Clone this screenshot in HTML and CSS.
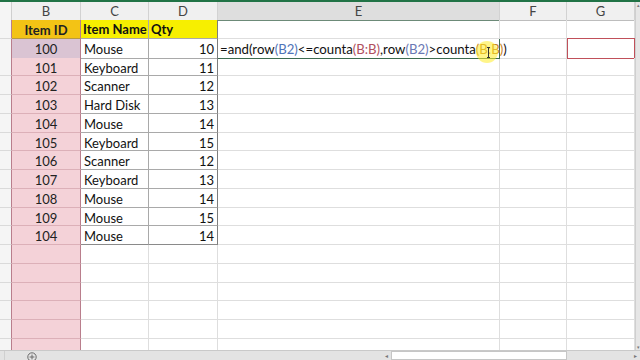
FILE: index.html
```html
<!DOCTYPE html>
<html lang="en">

<head>
    <meta charset="UTF-8">
    <meta name="viewport" content="width=device-width, initial-scale=1.0">
    <title>Sheet</title>
    <link rel="stylesheet" href="styles.css">
</head>

<body>

    <div class="app">
        <div class="app__ribbon-edge"></div>
        <div class="sheet">
            <div class="sheet__grid">

                <div class="row row--cols">
                    <div class="rh"></div>
                    <div class="col">B</div>
                    <div class="col">C</div>
                    <div class="col">D</div>
                    <div class="col col--active">E</div>
                    <div class="col">F</div>
                    <div class="col">G</div>
                </div>

                <div class="row">
                    <div class="rh"></div>
                    <div class="cell cell--b cell--head-id">Item ID</div>
                    <div class="cell cell--t cell--head">Item Name</div>
                    <div class="cell cell--t cell--qty cell--head cell--head-qty">Qty</div>
                    <div class="cell"></div>
                    <div class="cell"></div>
                    <div class="cell"></div>
                </div>

                <div class="row">
                    <div class="rh"></div>
                    <div class="cell cell--b cell--picked">100</div>
                    <div class="cell cell--t">Mouse</div>
                    <div class="cell cell--t cell--qty">10</div>
                    <div class="cell cell--edit">
                        <span class="formula">=and(row<span class="ref ref--1">(B2)</span>&lt;=counta<span class="ref ref--2">(B:B)</span>,row<span class="ref ref--3">(B2)</span>&gt;counta<span class="ref ref--4">(B:B)</span>)</span>
                    </div>
                    <div class="cell cell--over"></div>
                    <div class="cell cell--mark"></div>
                </div>

                <div class="row">
                    <div class="rh"></div>
                    <div class="cell cell--b">101</div>
                    <div class="cell cell--t">Keyboard</div>
                    <div class="cell cell--t cell--qty">11</div>
                    <div class="cell"></div><div class="cell"></div><div class="cell"></div>
                </div>
                <div class="row">
                    <div class="rh"></div>
                    <div class="cell cell--b">102</div>
                    <div class="cell cell--t">Scanner</div>
                    <div class="cell cell--t cell--qty">12</div>
                    <div class="cell"></div><div class="cell"></div><div class="cell"></div>
                </div>
                <div class="row">
                    <div class="rh"></div>
                    <div class="cell cell--b">103</div>
                    <div class="cell cell--t">Hard Disk</div>
                    <div class="cell cell--t cell--qty">13</div>
                    <div class="cell"></div><div class="cell"></div><div class="cell"></div>
                </div>
                <div class="row">
                    <div class="rh"></div>
                    <div class="cell cell--b">104</div>
                    <div class="cell cell--t">Mouse</div>
                    <div class="cell cell--t cell--qty">14</div>
                    <div class="cell"></div><div class="cell"></div><div class="cell"></div>
                </div>
                <div class="row">
                    <div class="rh"></div>
                    <div class="cell cell--b">105</div>
                    <div class="cell cell--t">Keyboard</div>
                    <div class="cell cell--t cell--qty">15</div>
                    <div class="cell"></div><div class="cell"></div><div class="cell"></div>
                </div>
                <div class="row">
                    <div class="rh"></div>
                    <div class="cell cell--b">106</div>
                    <div class="cell cell--t">Scanner</div>
                    <div class="cell cell--t cell--qty">12</div>
                    <div class="cell"></div><div class="cell"></div><div class="cell"></div>
                </div>
                <div class="row">
                    <div class="rh"></div>
                    <div class="cell cell--b">107</div>
                    <div class="cell cell--t">Keyboard</div>
                    <div class="cell cell--t cell--qty">13</div>
                    <div class="cell"></div><div class="cell"></div><div class="cell"></div>
                </div>
                <div class="row">
                    <div class="rh"></div>
                    <div class="cell cell--b">108</div>
                    <div class="cell cell--t">Mouse</div>
                    <div class="cell cell--t cell--qty">14</div>
                    <div class="cell"></div><div class="cell"></div><div class="cell"></div>
                </div>
                <div class="row">
                    <div class="rh"></div>
                    <div class="cell cell--b">109</div>
                    <div class="cell cell--t">Mouse</div>
                    <div class="cell cell--t cell--qty">15</div>
                    <div class="cell"></div><div class="cell"></div><div class="cell"></div>
                </div>
                <div class="row">
                    <div class="rh"></div>
                    <div class="cell cell--b">104</div>
                    <div class="cell cell--t cell--last">Mouse</div>
                    <div class="cell cell--t cell--qty cell--last">14</div>
                    <div class="cell"></div><div class="cell"></div><div class="cell"></div>
                </div>

                <div class="row"><div class="rh"></div><div class="cell cell--b"></div><div class="cell"></div><div class="cell"></div><div class="cell"></div><div class="cell"></div><div class="cell"></div></div>
                <div class="row"><div class="rh"></div><div class="cell cell--b"></div><div class="cell"></div><div class="cell"></div><div class="cell"></div><div class="cell"></div><div class="cell"></div></div>
                <div class="row"><div class="rh"></div><div class="cell cell--b"></div><div class="cell"></div><div class="cell"></div><div class="cell"></div><div class="cell"></div><div class="cell"></div></div>
                <div class="row"><div class="rh"></div><div class="cell cell--b"></div><div class="cell"></div><div class="cell"></div><div class="cell"></div><div class="cell"></div><div class="cell"></div></div>
                <div class="row"><div class="rh"></div><div class="cell cell--b"></div><div class="cell"></div><div class="cell"></div><div class="cell"></div><div class="cell"></div><div class="cell"></div></div>
                <div class="row"><div class="rh"></div><div class="cell cell--b"></div><div class="cell"></div><div class="cell"></div><div class="cell"></div><div class="cell"></div><div class="cell"></div></div>

                <div class="pointer"></div>
                <div class="ibeam"></div>
            </div>
            <div class="sheet__vscroll">
                <span class="sheet__arrow">&#9652;</span>
                <span class="sheet__arrow">&#9662;</span>
            </div>
        </div>

        <div class="tabs">
            <div class="tabs__left">
                <svg class="tabs__add" width="10" height="10" viewBox="0 0 10 10">
                    <circle cx="5" cy="5" r="4.2" fill="none" stroke="#6a6a6a" stroke-width="1" />
                    <path d="M5 2.6v4.8M2.6 5h4.8" stroke="#6a6a6a" stroke-width="1" />
                </svg>
            </div>
            <div class="tabs__scroll">
                <span class="tabs__arrow">&#9666;</span>
                <div class="tabs__thumb"></div>
                <div class="tabs__rest"></div>
                <span class="tabs__arrow">&#9656;</span>
            </div>
        </div>
    </div>

</body>

</html>
```

FILE: styles.css
```css
body{
    margin: 0;
    width: 640px;
    height: 360px;
    overflow: hidden;
    background-color: #fff;
    font-family: Lato, "Open Sans", sans-serif;
}

.app{
    width: 640px;
    height: 360px;
    display: flex;
    flex-direction: column;
}

.app__ribbon-edge{
    height: 2px;
    background-color: #217346;
}

.sheet{
    height: 348px;
    display: flex;
    overflow: hidden;
}

.sheet__grid{
    position: relative;
    width: 635px;
    display: flex;
    flex-direction: column;
}

.sheet__vscroll{
    width: 5px;
    background-color: #e6e6e6;
    border-left: 1px solid #cfcfcf;
    display: flex;
    flex-direction: column;
    justify-content: space-between;
    align-items: center;
    font-size: 5px;
    color: #777;
    overflow: hidden;
}

.row{
    display: grid;
    grid-template-columns: 12px 69px 68px 69px 282px 67px 68px;
    height: 18.75px;
    flex: none;
}

.row--cols{
    height: 18px;
    background-color: #f0f0f0;
}

.rh{
    background-color: #f5f5f5;
    border-right: 1px solid #b97e8c;
    border-bottom: 1px solid #dadada;
    box-sizing: border-box;
}

.row--cols .rh{
    border-right: 1px solid #cfcfcf;
    border-bottom: 1px solid #bdbdbd;
}

.col{
    font-size: 13px;
    color: #444;
    text-align: center;
    line-height: 18px;
    border-right: 1px solid #d2d2d2;
    border-bottom: 1px solid #bdbdbd;
    box-sizing: border-box;
}

.col--active{
    background-color: #dedede;
    border-bottom: 1px solid #6c8a78;
}

.cell{
    font-size: 13px;
    line-height: 17px;
    padding: 2px 3px 0;
    color: #111;
    white-space: nowrap;
    border-right: 1px solid #dedede;
    border-bottom: 1px solid #dedede;
    box-sizing: border-box;
    overflow: hidden;
}

.cell--b{
    background-color: #f4d2d8;
    text-align: center;
    color: #222;
    border-right: 1px solid #b97e8c;
    border-bottom: 1px solid #dcb0b8;
}

.cell--picked{
    background-color: #dac4d3;
    border-bottom: 1px solid #9b8aa0;
}

.cell--head-id{
    background-color: #f3c315;
    font-weight: 700;
    border-bottom: 1px solid #b99a40;
}

.cell--t{
    border-right: 1px solid #a9a9a9;
    border-bottom: 1px solid #a9a9a9;
}

.cell--head{
    background-color: #f7ef00;
    font-weight: 700;
    padding: 1px 2px 0;
    overflow: visible;
}

.cell--qty{
    text-align: right;
    border-right: 1px solid #7d7d7d;
}

.cell--head-qty{
    text-align: left;
}

.cell--last{
    border-bottom: 1px solid #8a8a8a;
}

.cell--edit{
    overflow: visible;
    position: relative;
    z-index: 1;
    padding: 2px 2px 0;
    border-bottom: 1px solid #3d6b50;
    border-right: 1px solid #3d6b50;
}

.cell--over{
    background-color: transparent;
}

.cell--mark{
    border: 1px solid #c0505a;
    margin-top: -1px;
}

.formula{
    color: #111;
    font-size: 13.2px;
}

.ref--1{
    color: #4f74b8;
}

.ref--2{
    color: #b0505e;
}

.ref--3{
    color: #6a78b4;
}

.ref--4{
    color: #c47f22;
}

.pointer{
    position: absolute;
    left: 476px;
    top: 39px;
    width: 22px;
    height: 22px;
    border-radius: 50%;
    background-color: rgba(255, 236, 40, 0.55);
    z-index: 2;
    pointer-events: none;
}

.ibeam{
    position: absolute;
    left: 487px;
    top: 45px;
    width: 3px;
    height: 11px;
    border-top: 1px solid #333;
    border-bottom: 1px solid #333;
    box-sizing: border-box;
    z-index: 3;
    background: linear-gradient(#333, #333) center / 1px 100% no-repeat;
}

.tabs{
    height: 10px;
    display: flex;
    background-color: #e3e3e3;
    border-top: 1px solid #c9c9c9;
    box-sizing: border-box;
}

.tabs__left{
    width: 378px;
    padding-left: 22px;
    box-sizing: border-box;
    display: flex;
    align-items: flex-start;
    border-left: 1px solid #d0d0d0;
    margin-left: 4px;
}

.tabs__add{
    margin-top: 1px;
}

.tabs__scroll{
    flex: 1;
    display: flex;
    align-items: flex-start;
    font-size: 6px;
    color: #777;
}

.tabs__arrow{
    line-height: 9px;
    padding: 0 3px;
}

.tabs__thumb{
    width: 176px;
    height: 9px;
    background-color: #fff;
    border: 1px solid #c6c6c6;
    box-sizing: border-box;
}

.tabs__rest{
    flex: 1;
}
```
